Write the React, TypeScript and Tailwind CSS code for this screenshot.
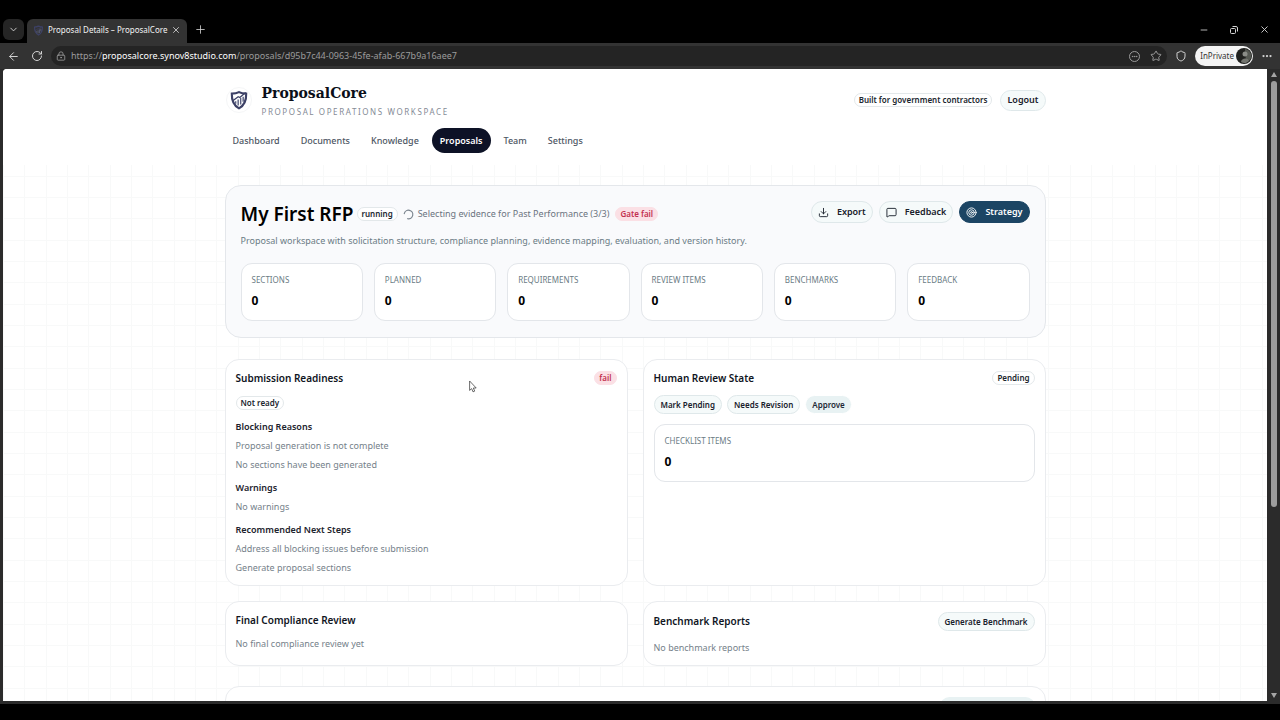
import type { ReactNode } from "react";
import { ArrowLeft, ChevronDown, Download, Ellipsis, LockKeyhole, MessageSquare, Minus, Plus, RotateCw, Shield, Star, Target, X } from "lucide-react";
import { clsx } from "clsx";

const NAV = ["Dashboard", "Documents", "Knowledge", "Proposals", "Team", "Settings"];
const STATS = ["Sections", "Planned", "Requirements", "Review items", "Benchmarks", "Feedback"];
const READINESS = [
  { title: "Blocking Reasons", items: ["Proposal generation is not complete", "No sections have been generated"] },
  { title: "Warnings", items: ["No warnings"] },
  { title: "Recommended Next Steps", items: ["Address all blocking issues before submission", "Generate proposal sections"] },
];

function ShieldLogo({ className }: { className?: string }) {
  return (
    <svg viewBox="0 0 24 24" className={className} fill="none" aria-hidden="true">
      <path d="M12 2.5c-2.6 1.4-5.3 1.9-8.6 1.9-.3 7.8 1.8 13.7 8.6 17.6 6.8-3.9 8.9-9.8 8.6-17.6-3.3 0-6-.5-8.6-1.9z" stroke="#3d4166" strokeWidth="2.6" />
      <path d="M8 13.500v3M11 11.500v7M14 9.500v8M17 8v6" stroke="#5b6080" strokeWidth="1.7" />
      <path d="M5 12.500 11 8l2 1 7-6" stroke="#3d4166" strokeWidth="1.5" />
    </svg>
  );
}

function Badge({ children, danger }: { children: ReactNode; danger?: boolean }) {
  return (
    <span
      className={clsx(
        "inline-flex h-[14px] shrink-0 items-center rounded-full border px-1 text-[8px] font-semibold",
        danger ? "border-[#fbe0e5] bg-[#fbe0e5] text-[#c2314f]" : "border-[#e3e8ea] bg-white text-[#20262e]",
      )}
    >
      {children}
    </span>
  );
}

function PillButton({ children, solid, soft, className }: { children: ReactNode; solid?: boolean; soft?: boolean; className?: string }) {
  return (
    <button
      type="button"
      className={clsx(
        "flex shrink-0 items-center rounded-full border px-[6px] font-semibold whitespace-nowrap",
        solid && "border-[#1c4564] bg-[#1c4564] text-white",
        soft && "border-white bg-[#e8f2f3] text-[#1f2a37]",
        !solid && !soft && "border-[#dfe8ea] bg-[#f5fafa] text-[#18202b]",
        className ?? "h-[19px] text-[8px]",
      )}
    >
      {children}
    </button>
  );
}

function Stat({ label, value }: { label: string; value: number }) {
  return (
    <div className="flex h-[58px] flex-col justify-between rounded-[11px] border border-[#e3e6ea] bg-white px-[10px] pt-[11px] pb-3">
      <div className="text-[8px] leading-[10px] text-[#6b7c85] uppercase">{label}</div>
      <div className="text-[12px] leading-[14px] font-bold text-black">{value}</div>
    </div>
  );
}

function Card({ children, className }: { children: ReactNode; className?: string }) {
  return <section className={clsx("rounded-[14px] border border-[#eaecef] bg-white p-[10px]", className)}>{children}</section>;
}

function BrowserBar() {
  return (
    <div className="shrink-0 text-[#d5d5d5]">
      <div className="flex h-[43px] items-end bg-black pl-[3px]">
        <button type="button" aria-label="Tab actions" className="mb-[3px] flex size-[21px] items-center justify-center rounded-md bg-[#252525]">
          <ChevronDown className="size-[11px]" strokeWidth={2} />
        </button>
        <div className="ml-[3px] flex h-[24px] w-[160px] items-center rounded-t-[6px] bg-[#333] px-[6px] pb-[2px]">
          <ShieldLogo className="size-[11px] shrink-0" />
          <span className="ml-[4px] flex-1 text-[8px] whitespace-nowrap text-[#f2f2f2]">Proposal Details – ProposalCore</span>
          <button type="button" aria-label="Close tab">
            <X className="size-[10px]" />
          </button>
        </div>
        <button type="button" aria-label="New tab" className="mb-[7px] ml-[7px]">
          <Plus className="size-[13px]" strokeWidth={1.5} />
        </button>
        <div className="mr-[10px] mb-[8px] ml-auto flex items-center gap-[20px]">
          <button type="button" aria-label="Minimize"><Minus className="size-[10px]" /></button>
          <button type="button" aria-label="Restore">
            <svg viewBox="0 0 10 10" className="size-[10px]" fill="none" stroke="currentColor" aria-hidden="true">
              <rect x="1.500" y="3.500" width="5" height="5" rx="1" />
              <path d="M3.500 1.500h3.500a1.500 1.500 0 0 1 1.500 1.500v3.500" />
            </svg>
          </button>
          <button type="button" aria-label="Close"><X className="size-[11px]" /></button>
        </div>
      </div>
      <div className="flex h-[26px] items-center bg-[#333] px-[7px]">
        <button type="button" aria-label="Back"><ArrowLeft className="size-[13px]" strokeWidth={1.8} /></button>
        <button type="button" aria-label="Reload" className="ml-[11px]"><RotateCw className="size-[12px]" /></button>
        <div className="ml-[8px] flex h-[20px] flex-1 items-center rounded-full bg-[#242424] px-[5px] text-[#9b9b9b]">
          <LockKeyhole className="size-[10px]" />
          <span className="ml-[5px] flex-1 text-[9px]">
            https://<span className="text-white">proposalcore.synov8studio.com</span>/proposals/d95b7c44-0963-45fe-afab-667b9a16aee7
          </span>
          <span className="mr-[10px] flex size-[11px] items-center justify-center rounded-full border border-[#9b9b9b]">
            <Ellipsis className="size-[7px]" strokeWidth={3} />
          </span>
          <Star className="size-[12px]" />
        </div>
        <Shield className="mx-[8px] size-[12px]" />
        <button type="button" className="flex h-[20px] items-center gap-[2px] rounded-full bg-[#f4f4f4] pr-px pl-[5px] text-[8px] text-[#333]">
          InPrivate
          <svg viewBox="0 0 16 16" className="size-[16px]" aria-hidden="true">
            <circle cx="8" cy="8" r="8" fill="#20211f" />
            <path d="M9 1a7 7 0 0 1 5 11l-4 2z" fill="#555852" />
            <circle cx="9" cy="6" r="2.500" fill="#8b8d88" />
            <path d="M5 14c0-4 7-5 8-1-2 2-5 3-8 1z" fill="#73756f" />
          </svg>
        </button>
        <button type="button" aria-label="Menu" className="ml-[8px]"><Ellipsis className="size-[12px]" strokeWidth={2.5} /></button>
      </div>
    </div>
  );
}

function SiteHeader() {
  return (
    <header className="bg-white pb-[12px]">
      <div className="mx-auto max-w-[821px]">
        <div className="flex items-center pt-[14px]">
          <div className="ml-px flex size-[26px] items-center justify-center rounded-full border border-[#f5f6f7]">
            <ShieldLogo className="size-[20px]" />
          </div>
          <div className="ml-[10px]">
            <div className="font-['DejaVu_Serif','Liberation_Serif',serif] text-[14px] leading-[20px] font-bold text-[#0b0f19]">ProposalCore</div>
            <div className="mt-[4px] text-[8px] leading-[10px] tracking-[0.2em] text-[#858b96] uppercase">Proposal Operations Workspace</div>
          </div>
          <div className="ml-auto flex items-center gap-2">
            <Badge>Built for government contractors</Badge>
            <PillButton className="h-[21px] text-[9px]">Logout</PillButton>
          </div>
        </div>
        <nav className="mt-[11px] flex gap-[5px]">
          {NAV.map((item) => (
            <a
              key={item}
              href="#"
              className={clsx(
                "flex h-[25px] items-center rounded-full px-2 text-[9px]",
                item === "Proposals" ? "bg-[#0d1226] font-semibold text-white" : "font-medium text-[#4d5663]",
              )}
            >
              {item}
            </a>
          ))}
        </nav>
      </div>
    </header>
  );
}

function Hero() {
  return (
    <section className="rounded-[16px] border border-[#e4e7eb] bg-[#f9fafc] px-[15px] pt-[15px] pb-4">
      <div className="flex items-center">
        <h1 className="text-[19px] leading-[26px] font-semibold text-black">My First RFP</h1>
        <div className="ml-[3px] flex items-center">
          <Badge>running</Badge>
          <svg viewBox="0 0 12 12" className="ml-[5px] size-[11px] shrink-0" fill="none" aria-hidden="true">
            <path d="M1.400 5A4.700 4.700 0 1 1 5 10.600" stroke="#7b858f" strokeWidth="1.300" strokeLinecap="round" />
          </svg>
          <span className="mr-[6px] ml-[4px] text-[9px] text-[#6b7480]">Selecting evidence for Past Performance (3/3)</span>
          <Badge danger>Gate fail</Badge>
        </div>
        <div className="ml-auto flex gap-[6px] self-start">
          <PillButton className="h-[22px] gap-[8px] text-[9px]"><Download className="size-[11px]" />Export</PillButton>
          <PillButton className="h-[22px] gap-[8px] text-[9px]"><MessageSquare className="size-[11px]" />Feedback</PillButton>
          <PillButton solid className="h-[22px] gap-[8px] text-[9px]"><Target className="size-[11px]" />Strategy</PillButton>
        </div>
      </div>
      <p className="mt-[7px] text-[9px] leading-[14px] text-[#6b7c85]">
        Proposal workspace with solicitation structure, compliance planning, evidence mapping, evaluation, and version history.
      </p>
      <div className="mt-[15px] grid grid-cols-6 gap-[11px]">
        {STATS.map((label) => (
          <Stat key={label} label={label} value={0} />
        ))}
      </div>
    </section>
  );
}

function ScrollTrack() {
  return (
    <div className="flex w-[13px] shrink-0 flex-col items-center bg-[#2b2b2b] py-[3px]" aria-hidden="true">
      <svg viewBox="0 0 6 5" className="h-[5px] w-[6px]"><path d="M3 0 6 5H0z" fill="#a5a5a5" /></svg>
      <div className="mt-[4px] h-[68%] w-[6px] rounded-full bg-[#9d9d9d]" />
      <svg viewBox="0 0 6 5" className="mt-auto h-[5px] w-[6px]"><path d="M3 5 6 0H0z" fill="#a5a5a5" /></svg>
    </div>
  );
}

export default function App() {
  return (
    <div className="flex h-screen flex-col bg-black pb-4 font-['Noto_Sans','Open_Sans',sans-serif]">
      <BrowserBar />
      <div className="flex min-h-0 flex-1 border-b-[3px] border-[#2b2b2b] bg-[#2b2b2b] pl-[3px]">
        <div className="relative flex-1 overflow-hidden rounded-tl-[4px] bg-white bg-[linear-gradient(to_right,#f8f9f9_1px,transparent_1px,transparent_21px,#f8f9f9_21px,#f8f9f9_22px,transparent_22px,transparent_43px,#f8f9f9_43px,#f8f9f9_44px,transparent_44px),linear-gradient(to_bottom,#f8f9f9_1px,transparent_1px,transparent_21px,#f8f9f9_21px,#f8f9f9_22px,transparent_22px,transparent_43px,#f8f9f9_43px,#f8f9f9_44px,transparent_44px)] bg-[size:64px_64px]">
          <SiteHeader />
          <main className="mx-auto max-w-[821px] pt-[20px]">
            <Hero />
            <div className="mt-[21px] grid grid-cols-2 gap-[15px]">
              <Card>
                <div className="flex h-4 items-center justify-between">
                  <h2 className="text-[10px] font-semibold text-[#10151e]">Submission Readiness</h2>
                  <Badge danger>fail</Badge>
                </div>
                <div className="mt-[10px] flex"><Badge>Not ready</Badge></div>
                <div className="mt-[10px] flex flex-col gap-[9px]">
                  {READINESS.map((group) => (
                    <div key={group.title}>
                      <h3 className="text-[9px] leading-[14px] font-semibold text-[#1c232d]">{group.title}</h3>
                      <ul>
                        {group.items.map((item) => (
                          <li key={item} className="mt-[5px] text-[9px] leading-[14px] text-[#75818a]">{item}</li>
                        ))}
                      </ul>
                    </div>
                  ))}
                </div>
              </Card>
              <Card>
                <div className="flex h-4 items-center justify-between">
                  <h2 className="text-[10px] font-semibold text-[#10151e]">Human Review State</h2>
                  <Badge>Pending</Badge>
                </div>
                <div className="mt-[9px] mb-[10px] flex gap-[5px]">
                  <PillButton>Mark Pending</PillButton>
                  <PillButton>Needs Revision</PillButton>
                  <PillButton soft>Approve</PillButton>
                </div>
                <Stat label="Checklist items" value={0} />
              </Card>
              <Card>
                <h2 className="text-[10px] leading-[16px] font-semibold text-[#10151e]">Final Compliance Review</h2>
                <p className="mt-[9px] text-[9px] leading-[14px] text-[#75818a]">No final compliance review yet</p>
              </Card>
              <Card>
                <div className="flex items-center justify-between">
                  <h2 className="text-[10px] font-semibold text-[#10151e]">Benchmark Reports</h2>
                  <PillButton>Generate Benchmark</PillButton>
                </div>
                <p className="mt-[10px] text-[9px] leading-[14px] text-[#75818a]">No benchmark reports</p>
              </Card>
            </div>
            <Card className="mt-5 flex justify-end">
              <div className="h-[19px] w-[95px] rounded-full bg-[#e8f2f3]" />
            </Card>
          </main>
          <svg viewBox="0 0 9 14" className="absolute top-[311px] left-[466px] h-[13px] w-[8px]" aria-hidden="true">
            <path d="M.7.8v10.600l2.300-2 1.500 3.600 1.900-.8-1.500-3.500h3.200z" fill="white" stroke="#444" strokeWidth=".9" />
          </svg>
        </div>
        <ScrollTrack />
      </div>
    </div>
  );
}
